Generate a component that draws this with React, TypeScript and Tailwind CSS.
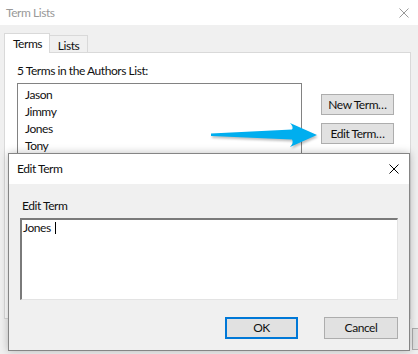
function CloseIcon({ className }: { className?: string }) {
  return (
    <svg width="10" height="10" viewBox="0 0 10 10" className={className}>
      <path d="M0.5 0.5 L9.5 9.5 M9.5 0.5 L0.5 9.5" stroke="currentColor" strokeWidth="1" fill="none" />
    </svg>
  );
}

function WinButton({ label, focused }: { label: string; focused?: boolean }) {
  return (
    <button
      className={
        focused
          ? 'flex h-[22px] w-[73px] items-center justify-center border-2 border-[#0078d7] bg-[#e1e1e1]'
          : 'flex h-[22px] w-[74px] items-center justify-center border border-[#adadad] bg-[#e1e1e1]'
      }
    >
      {label}
    </button>
  );
}

// only the first four show above the dialog
const terms = ['Jason', 'Jimmy', 'Jones', 'Tony'];

export default function App() {
  return (
    <div className="relative h-[354px] w-[418px] overflow-hidden bg-[#f0f0f0] font-['Segoe_UI','Lato',sans-serif] text-[12px] leading-[16px] tracking-[-0.45px] text-[#111]">
      {/* Term Lists window */}
      <div className="flex h-[25px] items-center justify-between bg-white pl-[6px] pr-[9px]">
        <span className="text-[#999999]">Term Lists</span>
        <CloseIcon className="text-[#999999]" />
      </div>

      <div className="px-[4px] pt-[8px]">
        <div className="flex items-end">
          <div className="relative z-10 -mb-px flex h-[20px] w-[46px] items-center justify-center border border-b-0 border-[#d9d9d9] bg-white pl-px">
            Terms
          </div>
          <div className="flex h-[17px] w-[38px] items-center justify-center border border-b-0 border-l-0 border-[#d9d9d9] bg-[#f0f0f0] pt-[3px]">
            Lists
          </div>
        </div>

        <div className="h-[267px] w-[407px] border border-[#d9d9d9] bg-white pl-[12px] pt-[10px]">
          <div>5 Terms in the Authors List:</div>
          <div className="mt-[4px] flex">
            <div className="h-[160px] w-[285px] border border-[#828282] px-[7px] pt-[2px] leading-[17px]">
              {terms.map((t) => (
                <div key={t}>{t}</div>
              ))}
            </div>
            <div className="ml-[19px] mt-[11px] flex flex-col gap-[8px]">
              <button className="flex h-[21px] w-[73px] items-center justify-center border border-[#adadad] bg-[#e1e1e1]">
                New Term…
              </button>
              <button className="flex h-[21px] w-[73px] items-center justify-center border border-[#adadad] bg-[#e1e1e1]">
                Edit Term…
              </button>
            </div>
          </div>
        </div>

        <div className="ml-[408px] mt-[9px] h-[22px] w-[73px] border border-[#adadad] bg-[#e1e1e1]" />
      </div>

      {/* arrow callout */}
      <svg
        width="112"
        height="34"
        viewBox="0 0 112 34"
        className="absolute left-[208px] top-[118px] drop-shadow-[1px_2px_1px_rgba(0,0,0,0.25)]"
      >
        <path d="M3 15.5 L84 11.5 Q86 9 82 5 L109 17 L82 29 Q86 25 84 21.5 L3 18 Z" fill="#00aeef" />
      </svg>

      {/* Edit Term dialog */}
      <div className="absolute left-[8px] top-[153px] flex h-[198px] w-[402px] flex-col border border-[#858585] bg-[#f0f0f0] shadow-[0_0_8px_rgba(0,0,0,0.25)]">
        <div className="flex h-[30px] items-center justify-between bg-white pl-[8px] pr-[10px]">
          <span>Edit Term</span>
          <CloseIcon className="text-black" />
        </div>
        <div className="px-[11px] pt-[14px]">
          <div className="pl-[2px]">Edit Term</div>
          <div className="mt-[4px] flex h-[82px] items-start border-b border-l-2 border-r border-t-2 border-b-[#e3e3e3] border-l-[#7a7a7a] border-r-[#e3e3e3] border-t-[#7a7a7a] bg-white pl-px">
            <span>Jones</span>
            <span className="ml-[4px] mt-[2px] h-[12px] w-px bg-black" />
          </div>
          <div className="mt-[17px] flex justify-end gap-[26px]">
            <WinButton label="OK" focused />
            <WinButton label="Cancel" />
          </div>
        </div>
      </div>
    </div>
  );
}
